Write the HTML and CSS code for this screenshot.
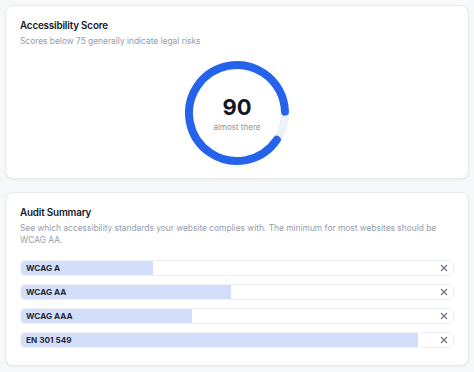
FILE: index.html
```html
<!DOCTYPE html>
<html lang="en">
<head>
    <meta charset="UTF-8">
    <meta name="viewport" content="width=device-width, initial-scale=1.0">
    <title>Accessibility Report</title>
    <link rel="stylesheet" href="styles.css">
</head>
<body>
    <div class="card score-card">
        <h2>Accessibility Score</h2>
        <p class="sub">Scores below 75 generally indicate legal risks</p>
        <div class="gauge">
            <svg width="106" height="106" viewBox="0 0 106 106">
                <circle class="track" cx="53" cy="53" r="48"></circle>
                <circle class="arc" cx="53" cy="53" r="48" stroke-dasharray="271.4 301.6" transform="rotate(34 53 53)"></circle>
            </svg>
            <div class="gauge-text">
                <span class="num">90</span>
                <span class="label">almost there</span>
            </div>
        </div>
    </div>

    <div class="card audit-card">
        <h2>Audit Summary</h2>
        <p class="sub">See which accessibility standards your website complies with. The minimum for most websites should be WCAG AA.</p>
        <div class="bars">
            <div class="bar">
                <div class="fill" style="width: 30.6%"></div>
                <span class="name">WCAG A</span>
                <svg class="x" width="8" height="8" viewBox="0 0 8 8"><path d="M1 1L7 7M7 1L1 7"/></svg>
            </div>
            <div class="bar">
                <div class="fill" style="width: 48.6%"></div>
                <span class="name">WCAG AA</span>
                <svg class="x" width="8" height="8" viewBox="0 0 8 8"><path d="M1 1L7 7M7 1L1 7"/></svg>
            </div>
            <div class="bar">
                <div class="fill" style="width: 39.6%"></div>
                <span class="name">WCAG AAA</span>
                <svg class="x" width="8" height="8" viewBox="0 0 8 8"><path d="M1 1L7 7M7 1L1 7"/></svg>
            </div>
            <div class="bar">
                <div class="fill" style="width: 92%"></div>
                <span class="name">EN 301 549</span>
                <svg class="x" width="8" height="8" viewBox="0 0 8 8"><path d="M1 1L7 7M7 1L1 7"/></svg>
            </div>
        </div>
    </div>
</body>
</html>
```

FILE: styles.css
```css
* {
    box-sizing: border-box;
    margin: 0;
    padding: 0;
}

body {
    background: #f7f8fa;
    font-family: Inter, "Noto Sans", sans-serif;
    padding: 5px;
    display: flex;
    flex-direction: column;
    gap: 13px;
    color: #111827;
}

.card {
    background: white;
    border: 1px solid #e8eaee;
    border-radius: 8px;
    box-shadow: 0 1px 2px rgba(0,0,0,0.05);
    padding: 12px 14px 0 14px;
}

.card h2 {
    font-size: 9.8px;
    font-weight: 600;
    line-height: 16px;
    letter-spacing: -0.15px;
}

.sub {
    font-size: 8.4px;
    line-height: 12px;
    color: #959cab;
    margin-top: 1px;
}

.score-card {
    height: 174px;
}

.gauge {
    position: relative;
    width: 106px;
    height: 106px;
    margin: 13px auto 0;
}

.gauge circle {
    fill: none;
    stroke-width: 8;
}

.track {
    stroke: #eef2f8;
}

.arc {
    stroke: #2563eb;
    stroke-linecap: round;
}

.gauge-text {
    position: absolute;
    inset: 0;
    display: flex;
    flex-direction: column;
    align-items: center;
    justify-content: center;
}

.num {
    font-size: 22px;
    font-weight: 700;
    line-height: 24px;
    margin-top: 0;
}

.label {
    font-size: 8px;
    color: #8b93a0;
    margin-top: 3px;
}

.audit-card {
    height: 174px;
}

.bars {
    display: flex;
    flex-direction: column;
    gap: 8px;
    margin-top: 14px;
}

.bar {
    position: relative;
    height: 16px;
    border: 1px solid #eef0f3;
    border-radius: 5px;
    display: flex;
    align-items: center;
    justify-content: space-between;
    padding: 0 5px 0 5px;
    overflow: hidden;
}

.fill {
    position: absolute;
    left: 0;
    top: 0;
    bottom: 0;
    background: #d3dffa;
}

.name {
    position: relative;
    font-size: 8.2px;
    font-weight: 700;
    color: #1f2937;
}

.x {
    position: relative;
    fill: none;
    stroke: #6b7280;
    stroke-width: 1.1;
}
```
